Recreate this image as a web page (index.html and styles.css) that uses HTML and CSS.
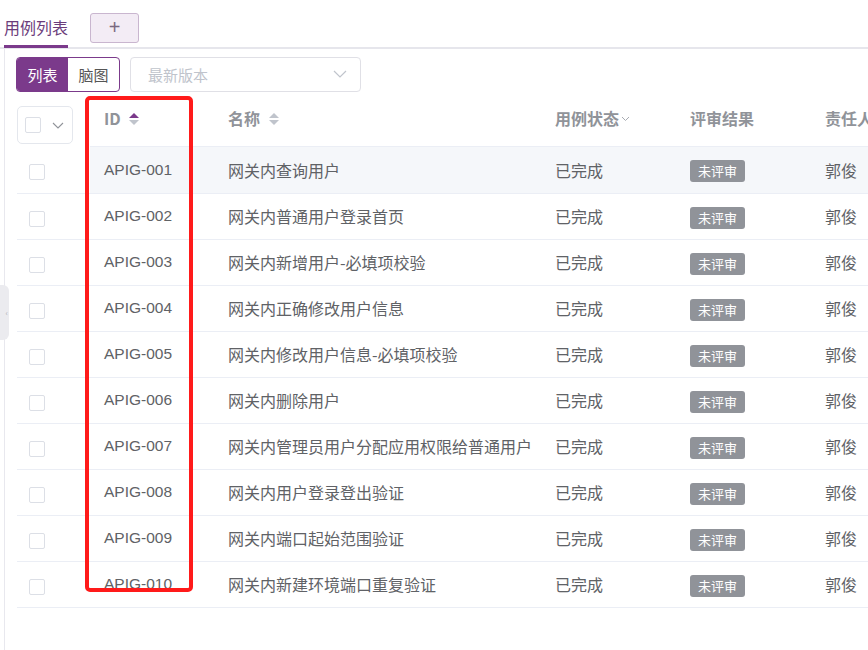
FILE: index.html
```html
<!DOCTYPE html>
<html>

<head>
	<meta charset="utf-8">
	<title>用例列表</title>
	<link rel="stylesheet" href="styles.css">
</head>

<body>
	<div class="page">
		<div class="tabs">
			<div class="tab active">用例列表</div>
			<div class="tab-add">+</div>
		</div>

		<div class="panel">
			<div class="collapse-handle">‹</div>

			<div class="toolbar">
				<div class="switch">
					<div class="switch-item on">列表</div>
					<div class="switch-item">脑图</div>
				</div>
				<div class="select">
					<span class="placeholder">最新版本</span>
					<svg class="select-arrow" width="14" height="8" viewBox="0 0 14 8">
						<path d="M1 1 L7 7 L13 1" fill="none" stroke="#c0c4cc" stroke-width="1.2" />
					</svg>
				</div>
			</div>

			<div class="table-wrap">
				<table class="case-table">
					<colgroup>
						<col style="width: 73px">
						<col style="width: 124px">
						<col style="width: 327px">
						<col style="width: 135px">
						<col style="width: 135px">
						<col style="width: 140px">
					</colgroup>
					<thead>
						<tr>
							<th class="col-check">
								<div class="check-menu">
									<span class="checkbox"></span>
									<svg width="12" height="7" viewBox="0 0 12 7">
										<path d="M1 1 L6 6 L11 1" fill="none" stroke="#909399" stroke-width="1.1" />
									</svg>
								</div>
							</th>
							<th>ID
								<svg class="sorter" width="12" height="14" viewBox="0 0 12 14">
									<path d="M1 6 L6 1 L11 6 Z" fill="#7b3a8b" />
									<path d="M1 8 L6 13 L11 8 Z" fill="#c0c4cc" />
								</svg>
							</th>
							<th>名称
								<svg class="sorter" width="12" height="14" viewBox="0 0 12 14">
									<path d="M1 6 L6 1 L11 6 Z" fill="#c0c4cc" />
									<path d="M1 8 L6 13 L11 8 Z" fill="#c0c4cc" />
								</svg>
							</th>
							<th>用例状态<svg class="filter" width="9" height="6" viewBox="0 0 9 6">
									<path d="M1 1 L4.5 4.5 L8 1" fill="none" stroke="#a8abb2" stroke-width="1" />
								</svg>
							</th>
							<th>评审结果</th>
							<th>责任人</th>
						</tr>
					</thead>
					<tbody id="case-rows"></tbody>
				</table>
				<div class="mark-box"></div>
			</div>
		</div>
	</div>

	<script>
		const cases = [
			"网关内查询用户",
			"网关内普通用户登录首页",
			"网关内新增用户-必填项校验",
			"网关内正确修改用户信息",
			"网关内修改用户信息-必填项校验",
			"网关内删除用户",
			"网关内管理员用户分配应用权限给普通用户",
			"网关内用户登录登出验证",
			"网关内端口起始范围验证",
			"网关内新建环境端口重复验证"
		];

		const tbody = document.getElementById('case-rows');
		cases.forEach((name, i) => {
			const tr = document.createElement('tr');
			if (i === 0) tr.className = 'hover';
			const id = `APIG-${String(i + 1).padStart(3, '0')}`;
			tr.innerHTML = `
				<td class="col-check"><span class="checkbox"></span></td>
				<td class="cell-id">${id}</td>
				<td>${name}</td>
				<td>已完成</td>
				<td><span class="tag">未评审</span></td>
				<td>郭俊</td>`;
			tbody.appendChild(tr);
		});
	</script>
</body>

</html>
```

FILE: styles.css
```css
html,
body {
	margin: 0;
	padding: 0;
	background: #fff;
	overflow: hidden;
}

body {
	font-family: "Noto Sans CJK SC", "Liberation Sans", sans-serif;
	color: #606266;
	width: 868px;
	height: 650px;
}

.page {
	padding-top: 13px;
}

/* tabs */
.tabs {
	display: flex;
	align-items: flex-start;
	height: 34px;
	border-bottom: 2px solid #e6e6ec;
}

.tab {
	margin-left: 4px;
	height: 34px;
	line-height: 29px;
	font-size: 16px;
	color: #6b3c7b;
	box-sizing: border-box;
}

.tab.active {
	border-bottom: 3px solid #7b3a8b;
	height: 35px;
}

.tab-add {
	margin-left: 22px;
	width: 49px;
	height: 30px;
	box-sizing: border-box;
	border: 1px solid #c9b6cf;
	border-radius: 3px;
	background: #f3ecf5;
	color: #7a6a80;
	font-family: "Liberation Sans", sans-serif;
	font-size: 20px;
	font-weight: 300;
	line-height: 27px;
	text-align: center;
}

/* panel */
.panel {
	position: relative;
	margin-left: 4px;
	border-left: 1px solid #e8e8ee;
	padding: 7px 0 0 11px;
	height: 620px;
}

.collapse-handle {
	position: absolute;
	left: -10px;
	top: 236px;
	width: 14px;
	height: 55px;
	background: #ebebef;
	border-radius: 6px;
	font-size: 8px;
	color: #b0b0b8;
	line-height: 55px;
	text-align: right;
	padding-right: 1px;
	box-sizing: border-box;
}

.toolbar {
	display: flex;
	align-items: center;
	gap: 10px;
}

.switch {
	display: flex;
	height: 35px;
	box-sizing: border-box;
	border: 1px solid #7b3a8b;
	border-radius: 4px;
	overflow: hidden;
	margin-top: 1px;
}

.switch-item {
	width: 51px;
	line-height: 33px;
	text-align: center;
	font-size: 15px;
	color: #555;
}

.switch-item.on {
	background: #7b3a8b;
	color: #fff;
}

.select {
	width: 231px;
	height: 35px;
	box-sizing: border-box;
	border: 1px solid #e0e0e6;
	border-radius: 4px;
	display: flex;
	align-items: center;
	justify-content: space-between;
	padding: 0 13px 0 17px;
}

.placeholder {
	font-size: 15px;
	color: #c0c4cc;
}

/* table */
.table-wrap {
	position: relative;
	margin-top: 4px;
	margin-left: 1px;
}

.case-table {
	border-collapse: collapse;
	table-layout: fixed;
	width: 934px;
}

.case-table th {
	height: 50px;
	padding: 10px 0 0 14px;
	box-sizing: border-box;
	text-align: left;
	vertical-align: top;
	font-size: 16px;
	font-weight: bold;
	line-height: 24px;
	color: #909399;
	border-bottom: 1px solid #ebeef5;
	white-space: nowrap;
}

.case-table th.col-check {
	padding-left: 0;
	border-bottom-color: transparent;
}

.check-menu {
	width: 56px;
	height: 38px;
	box-sizing: border-box;
	border: 1px solid #e4e7ed;
	border-radius: 5px;
	display: flex;
	align-items: center;
	gap: 11px;
	padding-left: 7px;
}

.sorter {
	vertical-align: -1px;
	margin-left: 4px;
}

.filter {
	vertical-align: 3px;
	margin-left: 2px;
}

.case-table td {
	height: 45px;
	padding: 0 0 0 14px;
	font-size: 16px;
	color: #606266;
	border-bottom: 1px solid #ebeef5;
	white-space: nowrap;
}

.case-table tbody tr:first-child td {
	height: 46px;
}

.case-table td.cell-id {
	font-family: "Liberation Sans", sans-serif;
	font-size: 15.5px;
}

.case-table td.col-check {
	padding-left: 12px;
	background: #fff;
}

.case-table tr.hover td {
	background: #f5f7fa;
}

.case-table tr.hover td.col-check {
	background: #fff;
}

.checkbox {
	display: inline-block;
	width: 16px;
	height: 16px;
	box-sizing: border-box;
	border: 1px solid #dcdfe6;
	border-radius: 2px;
	background: #fff;
	vertical-align: middle;
}

.tag {
	display: inline-block;
	height: 22px;
	line-height: 22px;
	padding: 0 8px;
	border-radius: 3px;
	background: #909399;
	color: #fff;
	font-size: 13px;
}

/* annotation */
.mark-box {
	position: absolute;
	left: 68px;
	top: 0;
	width: 108px;
	height: 496px;
	box-sizing: border-box;
	border: 4px solid #ff1a1a;
	border-radius: 5px;
}
```
